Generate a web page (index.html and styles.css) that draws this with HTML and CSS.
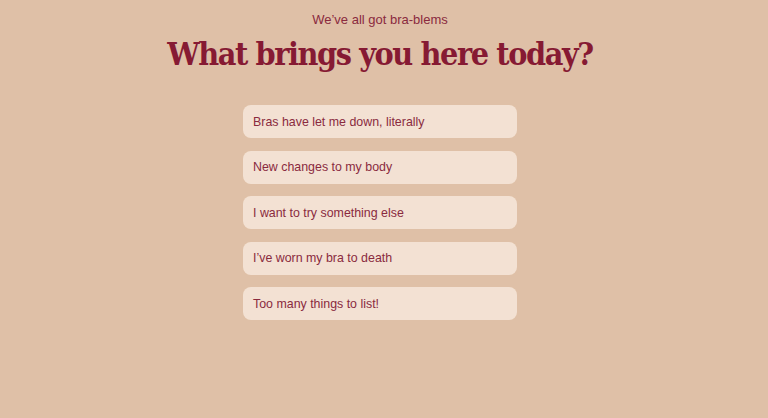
FILE: index.html
```html
<!DOCTYPE html>
<html>
<head>
<meta charset="utf-8">
<link rel="stylesheet" href="styles.css">
</head>
<body>
<main class="page">
  <p class="eyebrow">We’ve all got bra-blems</p>
  <h1 class="title">What brings you here today?</h1>
  <ul class="options">
    <li class="option">Bras have let me down, literally</li>
    <li class="option">New changes to my body</li>
    <li class="option">I want to try something else</li>
    <li class="option">I’ve worn my bra to death</li>
    <li class="option">Too many things to list!</li>
  </ul>
</main>
</body>
</html>
```
FILE: styles.css
```css
html, body {
  margin: 0;
  padding: 0;
  background: #dfc0a7;
  height: 100%;
}
.page {
  display: flex;
  flex-direction: column;
  align-items: center;
  padding: 12px 8px 0 0;
  color: #84182f;
}
.eyebrow {
  margin: 0;
  font-family: "Liberation Sans", Arial, sans-serif;
  font-size: 13px;
  line-height: 16px;
  color: #8a2a3e;
}
.title {
  margin: 5px 0 0;
  font-family: "DejaVu Serif Condensed", "DejaVu Serif", serif;
  font-weight: bold;
  font-size: 32px;
  line-height: 42px;
  letter-spacing: -1.4px;
  color: #861a33;
}
.options {
  list-style: none;
  margin: 30px 0 0;
  padding: 0;
  display: flex;
  flex-direction: column;
  gap: 12.5px;
}
.option {
  box-sizing: border-box;
  width: 274px;
  height: 33px;
  padding: 0 10px;
  display: flex;
  align-items: center;
  background: #f3e1d3;
  border-radius: 8px;
  font-family: "Liberation Sans", Arial, sans-serif;
  font-size: 12.4px;
  color: #8a2a3e;
}
```
